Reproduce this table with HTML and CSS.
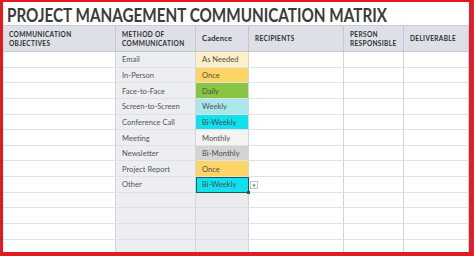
FILE: index.html
```html
<!DOCTYPE html>
<html>
<head>
<meta charset="utf-8">
<link rel="stylesheet" href="styles.css">
</head>
<body>
<div class="frame">
  <div class="title-bar"><h1 class="title">PROJECT MANAGEMENT COMMUNICATION MATRIX</h1></div>
  <div class="sheet">
    <div class="hd">COMMUNICATION<br>OBJECTIVES</div>
    <div class="hd hd-method">METHOD OF<br>COMMUNICATION</div>
    <div class="hd hd-cad">Cadence</div>
    <div class="hd">RECIPIENTS</div>
    <div class="hd">PERSON<br>RESPONSIBLE</div>
    <div class="hd">DELIVERABLE</div>

    <div class="c"></div><div class="c m">Email</div><div class="c cad as-needed">As Needed</div><div class="c"></div><div class="c"></div><div class="c"></div>
    <div class="c"></div><div class="c m">In-Person</div><div class="c cad once">Once</div><div class="c"></div><div class="c"></div><div class="c"></div>
    <div class="c"></div><div class="c m">Face-to-Face</div><div class="c cad daily">Daily</div><div class="c"></div><div class="c"></div><div class="c"></div>
    <div class="c"></div><div class="c m">Screen-to-Screen</div><div class="c cad weekly">Weekly</div><div class="c"></div><div class="c"></div><div class="c"></div>
    <div class="c"></div><div class="c m">Conference Call</div><div class="c cad biweekly">Bi-Weekly</div><div class="c"></div><div class="c"></div><div class="c"></div>
    <div class="c"></div><div class="c m">Meeting</div><div class="c cad monthly">Monthly</div><div class="c"></div><div class="c"></div><div class="c"></div>
    <div class="c"></div><div class="c m">Newsletter</div><div class="c cad bimonthly">Bi-Monthly</div><div class="c"></div><div class="c"></div><div class="c"></div>
    <div class="c"></div><div class="c m">Project Report</div><div class="c cad once">Once</div><div class="c"></div><div class="c"></div><div class="c"></div>
    <div class="c"></div><div class="c m">Other</div><div class="c cad biweekly selected">Bi-Weekly<span class="handle"></span><span class="dropdown">&#9662;</span></div><div class="c"></div><div class="c"></div><div class="c"></div>
    <div class="c"></div><div class="c m"></div><div class="c cad"></div><div class="c"></div><div class="c"></div><div class="c"></div>
    <div class="c"></div><div class="c m"></div><div class="c cad"></div><div class="c"></div><div class="c"></div><div class="c"></div>
    <div class="c"></div><div class="c m"></div><div class="c cad"></div><div class="c"></div><div class="c"></div><div class="c"></div>
    <div class="c"></div><div class="c m"></div><div class="c cad"></div><div class="c"></div><div class="c"></div><div class="c"></div>
  </div>
</div>
</body>
</html>
```
FILE: styles.css
```css
html, body {
  margin: 0;
  padding: 0;
  background: #ffffff;
}
.frame {
  box-sizing: border-box;
  width: 474px;
  height: 256px;
  overflow: hidden;
  border-top: 2px solid #e3191f;
  border-left: 3px solid #e3191f;
  border-right: 5px solid #d9222b;
  border-bottom: 4px solid #e01c22;
  background: #ffffff;
  font-family: "Lato", "DejaVu Sans", sans-serif;
}
.title-bar {
  height: 24px;
  box-sizing: border-box;
  padding: 3px 0 0 4px;
  border-bottom: 1px solid #c9ccd1;
  overflow: hidden;
}
.title {
  display: inline-block;
  margin: 0;
  font-family: "Lato", sans-serif;
  font-weight: 700;
  font-size: 19.5px;
  line-height: 20px;
  color: #3b3b3b;
  white-space: nowrap;
  transform: scaleX(0.782);
  transform-origin: left center;
}
.sheet {
  display: grid;
  grid-template-columns: 113px 80px 53px 95px 60px 65px;
  grid-template-rows: 26px;
  grid-auto-rows: 15.65px;
}
.hd {
  box-sizing: border-box;
  background: #dde1e7;
  border-right: 1px solid #c4c8ce;
  border-bottom: 1px solid #c4c8ce;
  display: flex;
  align-items: center;
  padding-left: 6px;
  font-size: 6.5px;
  line-height: 9px;
  font-weight: 700;
  color: #2f2f2f;
  letter-spacing: 0.35px;
}
.hd-cad {
  font-size: 7.5px;
  letter-spacing: 0.2px;
}
.c {
  position: relative;
  box-sizing: border-box;
  border-right: 1px solid #d3d5d9;
  border-bottom: 1px solid #e0e1e3;
  display: flex;
  align-items: center;
  padding-left: 6px;
  font-size: 7.6px;
  color: #555555;
  white-space: nowrap;
}
.m {
  background: #eceef1;
}
.cad {
  background: #e9ebee;
  color: #4f4f4f;
}
.as-needed { background: #fdf0c8; }
.once { background: #fdd567; }
.daily { background: #87c543; }
.weekly { background: #a9e7e8; }
.biweekly { background: #10e1ee; }
.monthly { background: #f3f3f3; }
.bimonthly { background: #d3d3d3; }
.selected {
  outline: 1.5px solid #1f5f45;
  outline-offset: -1px;
  z-index: 2;
}
.handle {
  position: absolute;
  right: -2px;
  bottom: -2px;
  width: 3px;
  height: 3px;
  background: #1f5f45;
}
.dropdown {
  position: absolute;
  left: 54px;
  top: 4px;
  width: 8px;
  height: 8px;
  box-sizing: border-box;
  border: 1px solid #c7c7c7;
  background: #ffffff;
  font-size: 5px;
  line-height: 6px;
  text-align: center;
  color: #555555;
}
```
